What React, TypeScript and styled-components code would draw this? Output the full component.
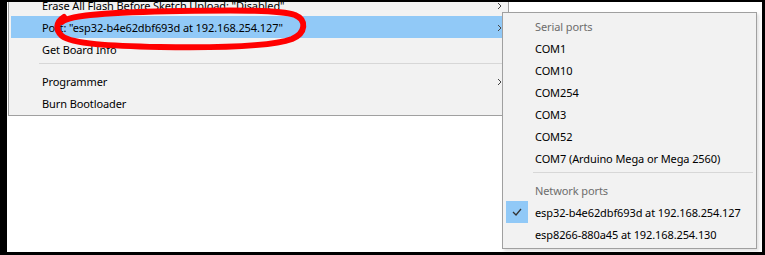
import styled, { createGlobalStyle } from "styled-components";

const GlobalStyle = createGlobalStyle`
  body {
    margin: 0;
    font-family: "Noto Sans", "Open Sans", sans-serif;
    font-size: 11px;
    letter-spacing: -0.1px;
  }
`;

const Screen = styled.div`
  position: relative;
  width: 765px;
  height: 255px;
  box-sizing: border-box;
  padding: 2px 3px 3px 7px;
  background: #000;
`;

const Canvas = styled.div`
  position: relative;
  width: 100%;
  height: 100%;
  background: #fff;
  overflow: hidden;
`;

const Menu = styled.div`
  margin: -9px 0 0 1px;
  width: 501px;
  box-sizing: border-box;
  border: 1px solid #a0a0a0;
  background: #f2f2f2;
  padding: 0 2px 1px 2px;
  display: flex;
  flex-direction: column;
`;

const SubMenu = styled.div`
  position: absolute;
  left: 495px;
  top: 10px;
  width: 255px;
  height: 237px;
  box-sizing: border-box;
  border: 1px solid #a0a0a0;
  background: #f2f2f2;
  padding: 2px 2px 3px 2px;
  display: flex;
  flex-direction: column;
  box-shadow: 2px 2px 3px rgba(0, 0, 0, 0.12);
`;

const Row = styled.div<{ $active?: boolean; $muted?: boolean; $indent?: number }>`
  position: relative;
  height: 22px;
  display: flex;
  align-items: center;
  padding-left: ${(p) => p.$indent ?? 31}px;
  background: ${(p) => (p.$active ? "#91c9f7" : "transparent")};
  color: ${(p) => (p.$muted ? "#6d6d6d" : "#000")};
  white-space: nowrap;
`;

const Arrow = styled.svg`
  position: absolute;
  right: 4px;
  top: 8px;
`;

const Separator = styled.div<{ $left: number }>`
  height: 1px;
  background: #d7d7d7;
  margin: 3px 1px 6px ${(p) => p.$left}px;
`;

const CheckBox = styled.div`
  position: absolute;
  left: 1px;
  top: 0;
  width: 22px;
  height: 22px;
  background: #91c9f7;
  display: flex;
  align-items: center;
  justify-content: center;
`;

const Scribble = styled.svg`
  position: absolute;
  left: 0;
  top: 0;
  pointer-events: none;
`;

const Chevron = () => (
  <Arrow width="5" height="8" viewBox="0 0 5 8">
    <path d="M1 1 L4 4 L1 7" fill="none" stroke="#444" strokeWidth="1" />
  </Arrow>
);

const serialPorts = ["COM1", "COM10", "COM254", "COM3", "COM52", "COM7 (Arduino Mega or Mega 2560)"];

export default function App() {
  return (
    <Screen>
      <GlobalStyle />
      <Canvas>
        <Menu>
          <Row>
            Erase All Flash Before Sketch Upload: "Disabled"
            <Chevron />
          </Row>
          <Row $active>
            Port: "esp32-b4e62dbf693d at 192.168.254.127"
            <Chevron />
          </Row>
          <Row>Get Board Info</Row>
          <Separator $left={28} />
          <Row>
            Programmer
            <Chevron />
          </Row>
          <Row>Burn Bootloader</Row>
        </Menu>

        <SubMenu>
          <Row $muted $indent={30}>Serial ports</Row>
          {serialPorts.map((p) => (
            <Row key={p} $indent={30}>
              {p}
            </Row>
          ))}
          <Separator $left={28} />
          <Row $muted $indent={30}>Network ports</Row>
          <Row $indent={30}>
            <CheckBox>
              <svg width="10" height="8" viewBox="0 0 10 8">
                <path d="M1 4 L4 7 L9 1" fill="none" stroke="#333" strokeWidth="1.3" />
              </svg>
            </CheckBox>
            esp32-b4e62dbf693d at 192.168.254.127
          </Row>
          <Row $indent={30}>esp8266-880a45 at 192.168.254.130</Row>
        </SubMenu>
      </Canvas>

      <Scribble width="765" height="255" viewBox="0 0 765 255">
        <path
          d="M62 22 C70 14, 120 12, 180 11 C240 10, 280 10, 295 15 C307 20, 306 33, 292 39 C270 47, 220 48, 160 47 C110 46, 72 44, 62 36 C55 30, 56 22, 64 17"
          fill="none"
          stroke="#ff0000"
          strokeWidth="6"
          strokeLinecap="round"
        />
      </Scribble>
    </Screen>
  );
}
